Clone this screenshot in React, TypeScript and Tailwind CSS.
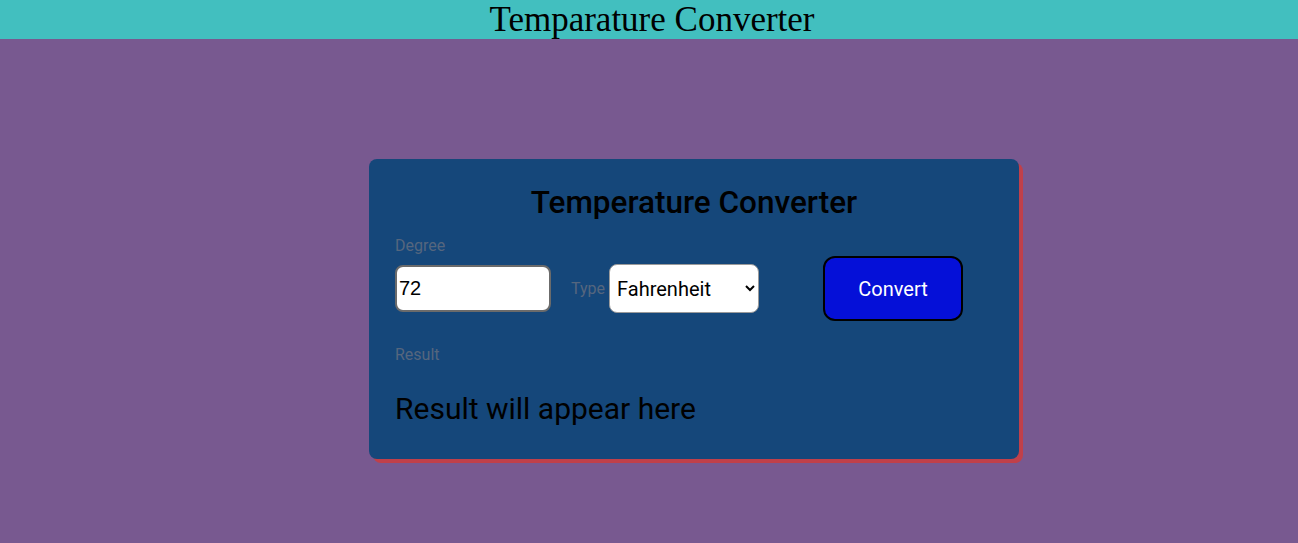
import { useState } from "react";

export default function App() {
    const [degree, setDegree] = useState("72");
    const [unit, setUnit] = useState("fahrenheit");
    const [result, setResult] = useState<string | null>(null);

    const convert = () => {
        const n = parseFloat(degree);
        if (isNaN(n)) return;
        if (unit === "fahrenheit") {
            setResult(`${(((n - 32) * 5) / 9).toFixed(2)} °C`);
        } else {
            setResult(`${((n * 9) / 5 + 32).toFixed(2)} °F`);
        }
    };

    return (
        <div className="min-h-screen bg-[#785990] font-['Roboto',sans-serif]">
            <header className="h-[39px] bg-[#42bfbf] flex items-center justify-center">
                <h1 className="pl-[6px] font-['Liberation_Serif',serif] text-[35px] leading-[39px] text-black">
                    Temparature Converter
                </h1>
            </header>

            <div className="pt-[120px] pl-[369px]">
                <div className="w-[650px] h-[300px] bg-[#15477a] rounded-[8px] shadow-[4px_4px_0_#c0404a] px-[26px] pt-[26px]">
                    <h2 className="text-center text-[31.5px] leading-[36px] font-medium text-black mb-[15px]">
                        Temperature Converter
                    </h2>

                    <label className="block text-[16px] leading-[20px] text-[#55667e]">Degree</label>
                    <div className="flex items-center h-[65px]">
                        <input
                            value={degree}
                            onChange={(e) => setDegree(e.target.value)}
                            className="w-[156px] h-[47px] bg-white rounded-[8px] border-2 border-[#6b6b6b] px-[2px] text-[20px] text-black font-['Liberation_Sans',sans-serif] outline-none"
                        />
                        <span className="ml-[20px] mr-[4px] text-[16px] text-[#55667e]">Type</span>
                        <select
                            value={unit}
                            onChange={(e) => setUnit(e.target.value)}
                            className="w-[150px] h-[49px] bg-white rounded-[8px] border border-[#9a9a9a] pl-[3px] text-[20px] text-black"
                        >
                            <option value="fahrenheit">Fahrenheit</option>
                            <option value="celsius">Celsius</option>
                        </select>
                        <button
                            onClick={convert}
                            className="ml-[64px] w-[140px] h-[65px] bg-[#0510d8] border-2 border-black rounded-[12px] text-white text-[20px]"
                        >
                            Convert
                        </button>
                    </div>

                    <label className="block mt-[24px] text-[16px] leading-[20px] text-[#55667e]">Result</label>
                    <p className="mt-[27px] text-[30px] leading-[34px] text-black">
                        {result ?? "Result will appear here"}
                    </p>
                </div>
            </div>
        </div>
    );
}
